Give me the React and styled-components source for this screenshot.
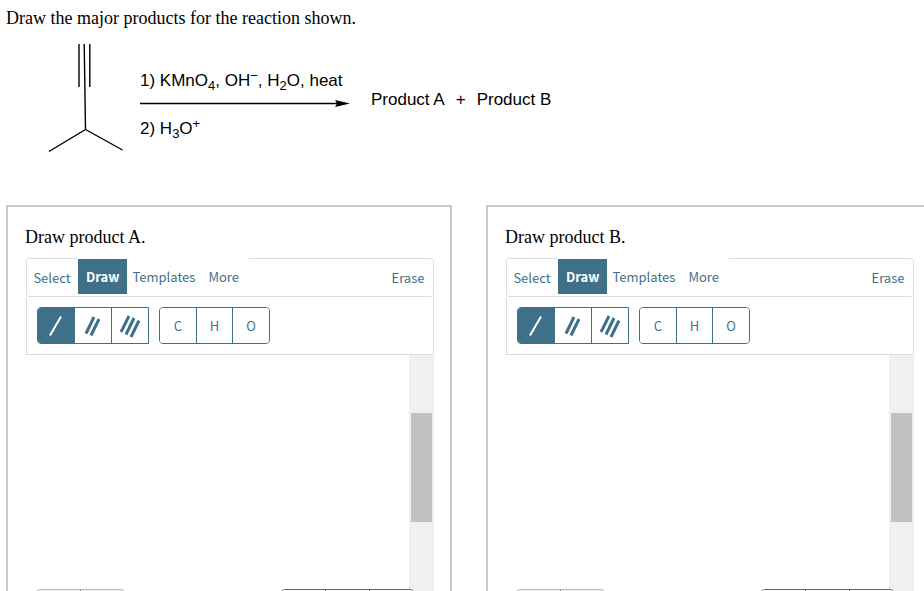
import React from "react";
import styled, { createGlobalStyle, css } from "styled-components";

const GlobalStyles = createGlobalStyle`
  * {
    box-sizing: border-box;
  }
  body {
    margin: 0;
    background-color: #ffffff;
    color: #000000;
    font-family: "Liberation Serif", serif;
    font-size: 18px;
    line-height: 24px;
  }
`;

const colors = {
  primary: "#3f7089",
  line: "#dcdcdc",
  frame: "#cacaca",
  track: "#f0f0f0",
  thumb: "#c1c1c1",
  disabled: "#a9b9c2",
};

const Page = styled.main`
  height: 100vh;
  padding: 6px 0 0 6px;
  overflow: hidden;
`;

const Question = styled.p`
  margin: 0;
`;

const Reaction = styled.section`
  display: flex;
  align-items: flex-start;
  min-height: 175px;
  padding: 10px 0 0 38px;
  font-family: "Liberation Sans", sans-serif;
  font-size: 17px;
  line-height: 24px;
  white-space: nowrap;

  sub,
  sup {
    font-size: 13px;
    line-height: 0;
  }
  sub {
    vertical-align: -4px;
  }
  sup {
    vertical-align: 6px;
  }
`;

const Molecule = styled.svg`
  flex: none;
  width: 84px;
  height: 114px;
`;

const Conditions = styled.div`
  width: 212px;
  margin-left: 12px;
  padding-top: 29px;

  svg {
    display: block;
    width: 211px;
    height: 10px;
    margin: 5px 0 9px;
  }
`;

const Products = styled.div`
  display: flex;
  gap: 11px;
  padding: 48px 0 0 19px;
`;

const Panels = styled.div`
  display: grid;
  grid-template-columns: 1fr 1fr;
  gap: 34px;
  margin-right: -8px;
`;

const Panel = styled.section`
  min-width: 0;
  padding: 18px 16px 18px 17px;
  border: 2px solid ${colors.frame};

  h2 {
    margin: 0 0 9px;
    font-size: 18px;
    font-weight: normal;
    line-height: 24px;
  }
`;

const Editor = styled.div`
  margin-left: 1px;
  font-family: "Noto Sans CJK SC", sans-serif;
  font-size: 13px;
  line-height: 20px;
`;

const TabBar = styled.nav`
  display: flex;
  height: 39px;
  border: 1px solid ${colors.line};
  border-radius: 3px;
`;

const TabGroup = styled.div`
  display: flex;
  width: 172px;
  height: 36px;
  margin-top: -1px;
  padding: 1px 0 0 1px;
  background-color: #ffffff;
`;

const Tab = styled.button`
  height: ${(props) => (props.$edge ? "37px" : "35px")};
  margin: 0;
  padding: 0 ${(props) => (props.$wide ? "8px" : "5px")};
  border: 0;
  background-color: ${(props) => (props.$active ? colors.primary : "#ffffff")};
  color: ${(props) => (props.$active ? "#ffffff" : colors.primary)};
  font: inherit;
  font-weight: ${(props) => (props.$active ? "bold" : "normal")};

  ${(props) =>
    props.$edge &&
    css`
      width: 50px;
      background-color: transparent;
    `}
`;

const Spacer = styled.div`
  flex: 1;
`;

const Tools = styled.div`
  display: flex;
  gap: 10px;
  padding: 10px;
  border: 1px solid ${colors.line};
  border-top: 0;
`;

const ButtonGroup = styled.div`
  display: flex;
  overflow: hidden;
  border: 1px solid
    ${(props) => (props.$disabled ? colors.disabled : colors.primary)};
  border-radius: ${(props) => (props.$squareEnd ? "4px 0 0 4px" : "4px")};

  button + button {
    border-left: 1px solid ${colors.primary};
  }
`;

const ToolButton = styled.button`
  display: flex;
  align-items: center;
  justify-content: center;
  width: ${(props) => props.$width || 37}px;
  height: 35px;
  margin: 0;
  padding: 0;
  border: 0;
  background-color: ${(props) => (props.$active ? colors.primary : "#ffffff")};
  color: ${(props) => (props.$active ? "#ffffff" : colors.primary)};
  font: inherit;

  &:disabled {
    background-color: #f0f0f0;
  }
  svg {
    display: block;
  }
`;

const Canvas = styled.div`
  position: relative;
  display: flex;
  justify-content: flex-end;
  height: 280px;
`;

const ScrollTrack = styled.div`
  width: 25px;
  padding: 58px 2px 0;
  background-color: ${colors.track};
`;

const ScrollThumb = styled.div`
  height: 109px;
  background-color: ${colors.thumb};
`;

const CanvasControls = styled.div`
  position: absolute;
  right: 20px;
  bottom: 9px;
  left: 10px;
  display: flex;
  justify-content: space-between;
`;

const bondLines = {
  1: ["M5 22.5 16 3.5"],
  2: ["M4 20.5 12 4", "M9 22.5 17 6"],
  3: ["M2 19 10 3", "M7 21.5 15 5", "M12 24 20 7.5"],
};

const BondIcon = ({ count }) => (
  <svg width="22" height="26" viewBox="0 0 22 26" aria-hidden="true">
    {bondLines[count].map((d) => (
      <path
        key={d}
        d={d}
        fill="none"
        stroke="currentColor"
        strokeWidth={count === 1 ? 2 : 3}
      />
    ))}
  </svg>
);

const bonds = ["Single bond", "Double bond", "Triple bond"];
const atoms = ["C", "H", "O"];
const zoomControls = [
  { label: "Zoom in", icon: "M3 9h12M9 3v12" },
  { label: "Reset zoom", icon: "M15 9a6 6 0 1 1-2-4M13 1v4H9" },
  { label: "Zoom out", icon: "M3 9h12" },
];
const historyControls = [
  { label: "Undo", icon: "M7 3 3 7l4 4M3 7h8a4 4 0 0 1 0 8" },
  { label: "Redo", icon: "M11 3l4 4-4 4M15 7H7a4 4 0 0 0 0 8" },
];

const ControlGroup = ({ items, disabled }) => (
  <ButtonGroup $disabled={disabled}>
    {items.map(({ label, icon }, index) => (
      <ToolButton
        key={label}
        type="button"
        aria-label={label}
        disabled={disabled}
        $width={index === 0 ? 43 : 44}
      >
        <svg width="18" height="18" viewBox="0 0 18 18" aria-hidden="true">
          <path d={icon} fill="none" stroke="currentColor" strokeWidth="2" />
        </svg>
      </ToolButton>
    ))}
  </ButtonGroup>
);

const DrawingPanel = ({ title }) => (
  <Panel>
    <h2>{title}</h2>
    <Editor>
      <TabBar>
        <Tab type="button" $edge>
          Select
        </Tab>
        <TabGroup>
          <Tab type="button" $active $wide>
            Draw
          </Tab>
          <Tab type="button">Templates</Tab>
          <Tab type="button" $wide>
            More
          </Tab>
        </TabGroup>
        <Spacer />
        <Tab type="button" $edge>
          Erase
        </Tab>
      </TabBar>
      <Tools>
        <ButtonGroup $squareEnd>
          {bonds.map((bond, index) => (
            <ToolButton
              key={bond}
              type="button"
              aria-label={bond}
              $active={index === 0}
              $width={index === 0 ? 36 : 37}
            >
              <BondIcon count={index + 1} />
            </ToolButton>
          ))}
        </ButtonGroup>
        <ButtonGroup>
          {atoms.map((atom, index) => (
            <ToolButton
              key={atom}
              type="button"
              $width={index === 2 ? 37 : 36}
            >
              {atom}
            </ToolButton>
          ))}
        </ButtonGroup>
      </Tools>
      <Canvas>
        <ScrollTrack>
          <ScrollThumb />
        </ScrollTrack>
        <CanvasControls>
          <ControlGroup items={historyControls} disabled />
          <ControlGroup items={zoomControls} />
        </CanvasControls>
      </Canvas>
    </Editor>
  </Panel>
);

const App = () => {
  return (
    <>
      <GlobalStyles />
      <Page>
        <Question>Draw the major products for the reaction shown.</Question>
        <Reaction>
          <Molecule viewBox="0 0 84 114" role="img" aria-label="3-methyl-1-butyne">
            <path
              d="M35 4V47M40.2 4 41.5 89.5M45.8 4V47M5 111.5 41.5 89.5 78.5 110"
              fill="none"
              stroke="#000000"
              strokeWidth="1.4"
            />
          </Molecule>
          <Conditions>
            <div>
              1) KMnO<sub>4</sub>, OH<sup>−</sup>, H<sub>2</sub>O, heat
            </div>
            <svg viewBox="0 0 211 10" aria-hidden="true">
              <path d="M0 5.5H198" stroke="#000000" strokeWidth="1.6" />
              <path d="M195 2 210 5.5 195 9 197 5.5Z" />
            </svg>
            <div>
              2) H<sub>3</sub>O<sup>+</sup>
            </div>
          </Conditions>
          <Products>
            <span>Product A</span>
            <span>+</span>
            <span>Product B</span>
          </Products>
        </Reaction>
        <Panels>
          <DrawingPanel title="Draw product A." />
          <DrawingPanel title="Draw product B." />
        </Panels>
      </Page>
    </>
  );
};

export default App;
